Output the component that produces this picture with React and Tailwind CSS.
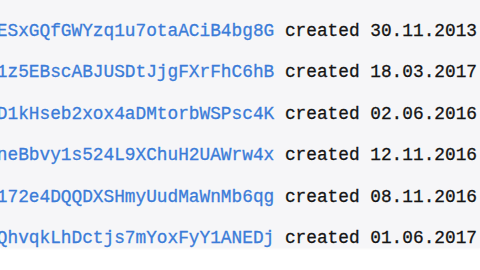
const ROWS = [
  { hash: '1PqtESxGQfGWYzq1u7otaACiB4bg8G', date: '30.11.2013' },
  { hash: '1Kc71z5EBscABJUSDtJjgFXrFhC6hB', date: '18.03.2017' },
  { hash: '1LwaD1kHseb2xox4aDMtorbWSPsc4K', date: '02.06.2016' },
  { hash: '1HvmneBbvy1s524L9XChuH2UAWrw4x', date: '12.11.2016' },
  { hash: '1Ntp172e4DQQDXSHmyUudMaWnMb6qg', date: '08.11.2016' },
  { hash: '1FjsQhvqkLhDctjs7mYoxFyY1ANEDj', date: '01.06.2017' },
];

export default function App() {
  return (
    <div className="h-[270px] w-[480px] overflow-hidden bg-white">
      <div className="h-[248px] bg-[#f6f6f8] pt-[10.5px] shadow-[0_1px_2px_rgba(0,0,0,0.04)]">
        {ROWS.map((row) => (
          <div
            key={row.hash}
            className="flex justify-end overflow-hidden whitespace-nowrap pr-[3px] text-[17.8px] leading-[41.5px] [-webkit-text-stroke:0.3px] [font-family:'Courier_New','Liberation_Mono',monospace]"
          >
            <span className="text-[#3b7cd8]">{row.hash}</span>
            <span className="text-[#141414]">&nbsp;created {row.date}</span>
          </div>
        ))}
      </div>
    </div>
  );
}
